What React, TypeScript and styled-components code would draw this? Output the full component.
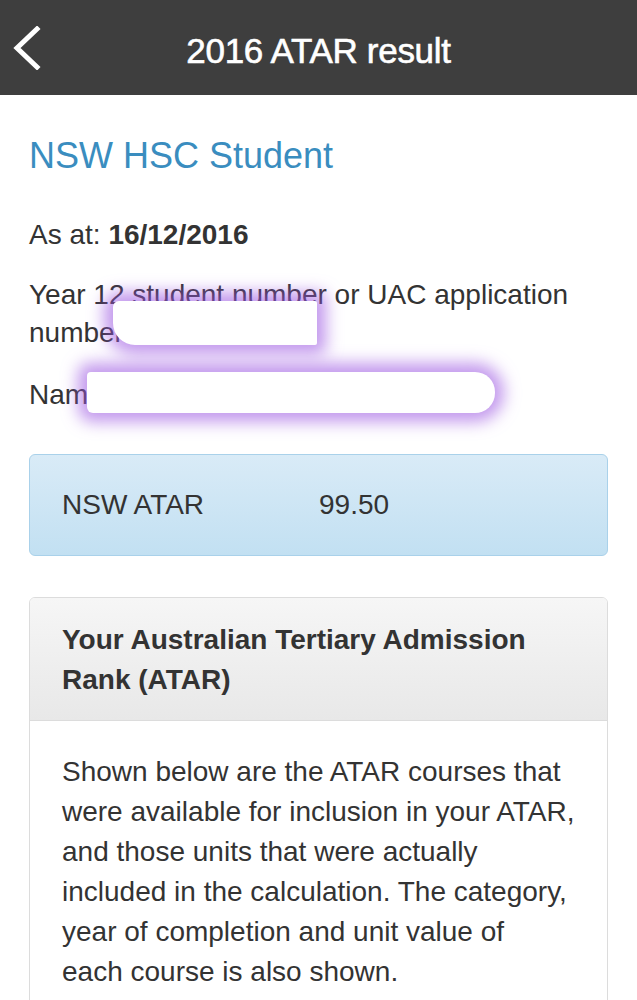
import styled, { createGlobalStyle } from "styled-components";

const GlobalStyle = createGlobalStyle`
  body {
    margin: 0;
    background: #fff;
    font-family: "Liberation Sans", Arial, sans-serif;
    color: #333;
  }
`;

const Header = styled.header`
  height: 95px;
  background: #3e3e3e;
  display: grid;
  grid-template-columns: 60px 1fr 60px;
  align-items: center;
`;

const BackButton = styled.div`
  display: flex;
  align-items: center;
  padding-left: 12px;
  height: 100%;
`;

const Title = styled.h1`
  margin: 0;
  padding-top: 6px;
  text-align: center;
  color: #fff;
  font-size: 35px;
  font-weight: 400;
  letter-spacing: -0.3px;
  -webkit-text-stroke: 0.6px #fff;
`;

const Content = styled.main`
  position: relative;
  padding: 41px 29px 0;
`;

const Heading = styled.h2`
  margin: 0;
  font-size: 36px;
  font-weight: 400;
  line-height: 40px;
  color: #3a8dbf;
`;

const Line = styled.p<{ $top: number }>`
  margin: ${(p) => p.$top}px 0 0;
  font-size: 28px;
  line-height: 38px;
  color: #333;
`;

const Redaction = styled.div<{ $left: number; $top: number; $w: number; $h: number; $radius: string }>`
  position: absolute;
  left: ${(p) => p.$left}px;
  top: ${(p) => p.$top}px;
  width: ${(p) => p.$w}px;
  height: ${(p) => p.$h}px;
  background: #fff;
  border-radius: ${(p) => p.$radius};
  box-shadow: 0 0 16px 9px rgba(155, 85, 225, 0.6);
`;

const AtarBox = styled.div`
  margin-top: 40px;
  height: 100px;
  border: 1px solid #a9d1ea;
  border-radius: 6px;
  background: linear-gradient(#d9ebf7, #c2e0f2);
  display: grid;
  grid-template-columns: 257px 1fr;
  align-items: center;
  padding-left: 32px;
  font-size: 28px;
  color: #333;
`;

const Panel = styled.section`
  margin-top: 41px;
  border: 1px solid #dcdcdc;
  border-radius: 6px;
  overflow: hidden;
`;

const PanelHeader = styled.div`
  background: linear-gradient(#f6f6f6, #e8e8e8);
  border-bottom: 1px solid #dcdcdc;
  padding: 22px 24px 20px 32px;
  font-size: 28px;
  font-weight: 700;
  line-height: 40px;
  color: #333;
`;

const PanelBody = styled.div`
  padding: 31px 18px 40px 32px;
  font-size: 28px;
  line-height: 40px;
  color: #333;
`;

const Chevron = () => (
  <svg width="32" height="44" viewBox="0 0 32 44">
    <polyline
      points="25,3 5,22 25,41"
      fill="none"
      stroke="#fff"
      strokeWidth="5"
      strokeLinecap="square"
    />
  </svg>
);

export default function App() {
  return (
    <>
      <GlobalStyle />
      <Header>
        <BackButton>
          <Chevron />
        </BackButton>
        <Title>2016 ATAR result</Title>
        <div />
      </Header>
      <Content>
        <Heading>NSW HSC Student</Heading>
        <Line $top={40}>
          As at: <b>16/12/2016</b>
        </Line>
        <Line $top={22}>Year 12 student number or UAC application number: 12345678</Line>
        <Line $top={24}>Name: Student Name</Line>
        <Redaction $left={113} $top={206} $w={204} $h={44} $radius="6px 2px 2px 22px" />
        <Redaction $left={87} $top={277} $w={408} $h={41} $radius="4px 20px 20px 6px" />
        <AtarBox>
          <span>NSW ATAR</span>
          <span>99.50</span>
        </AtarBox>
        <Panel>
          <PanelHeader>Your Australian Tertiary Admission Rank (ATAR)</PanelHeader>
          <PanelBody>
            Shown below are the ATAR courses that were available for inclusion in your ATAR, and
            those units that were actually included in the calculation. The category, year of
            completion and unit value of
            <br />
            each course is also shown.
          </PanelBody>
        </Panel>
      </Content>
    </>
  );
}
